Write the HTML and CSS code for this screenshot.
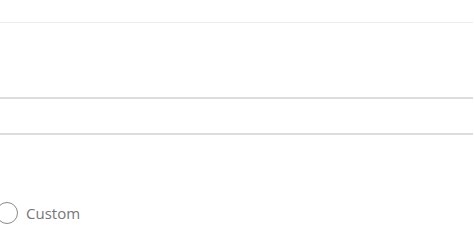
FILE: index.html
```html
<!DOCTYPE html>
<html>
<head>
<meta charset="utf-8">
<link rel="stylesheet" href="styles.css">
</head>
<body>
<div class="page">
  <div class="header"></div>
  <div class="field"></div>
  <label class="option">
    <span class="radio"></span>
    <span class="label">Custom</span>
  </label>
</div>
</body>
</html>
```
FILE: styles.css
```css
html, body {
  margin: 0;
  padding: 0;
  background: #ffffff;
}
.page {
  width: 474px;
  height: 248px;
  overflow: hidden;
  font-family: "Open Sans", "Noto Sans", sans-serif;
}
.header {
  width: 473px;
  height: 22px;
  border-bottom: 1px solid #ececec;
}
.field {
  margin-top: 74px;
  width: 473px;
  height: 34px;
  border-top: 2px solid #dcdcdc;
  border-bottom: 2px solid #dcdcdc;
}
.option {
  display: flex;
  align-items: center;
  gap: 8px;
  margin-top: 66px;
  margin-left: -4px;
}
.radio {
  width: 20px;
  height: 20px;
  border: 1px solid #8a8a8a;
  border-radius: 50%;
  box-sizing: content-box;
}
.label {
  font-size: 15px;
  color: #767676;
  line-height: 22px;
  padding-top: 1px;
}
```
